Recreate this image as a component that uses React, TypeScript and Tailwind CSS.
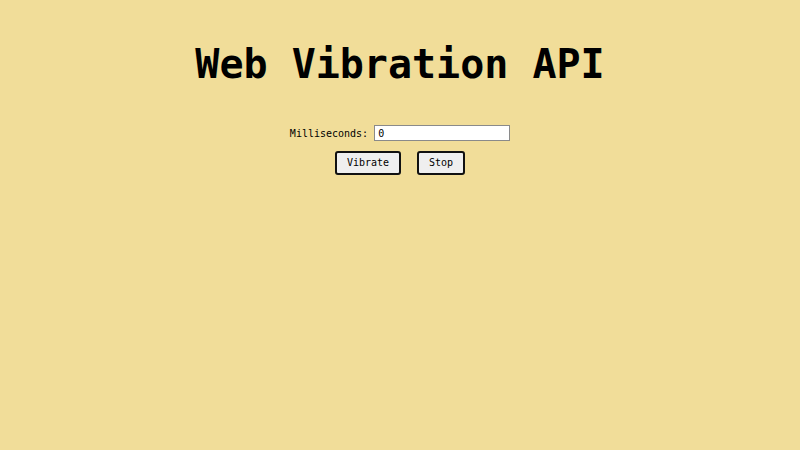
import { useState } from 'react';

export default function App() {
  const [ms, setMs] = useState('0');

  const vibrate = () => {
    if (navigator.vibrate) navigator.vibrate(parseInt(ms) || 0);
  };

  const stop = () => {
    if (navigator.vibrate) navigator.vibrate(0);
  };

  const buttonClass =
    "h-[24px] px-[10px] bg-[#efefef] border-2 border-[#111] rounded-[3px] text-[10px] text-black leading-none";

  return (
    <div
      className="w-[800px] h-[450px] bg-[#f1dd99] flex flex-col items-center text-black"
      style={{ fontFamily: '"DejaVu Sans Mono", monospace' }}
    >
      <h1 className="mt-[40px] text-[40px] font-bold leading-[48px]">Web Vibration API</h1>

      <div className="mt-[37px] flex items-center gap-[6px]">
        <label htmlFor="ms" className="text-[10px]">Milliseconds:</label>
        <input
          id="ms"
          type="text"
          value={ms}
          onChange={(e) => setMs(e.target.value)}
          className="w-[136px] h-[16px] px-[3px] bg-white border border-[#8a8a8a] text-[10px] outline-none"
        />
      </div>

      <div className="mt-[10px] flex gap-[16px]">
        <button onClick={vibrate} className={buttonClass}>Vibrate</button>
        <button onClick={stop} className={buttonClass}>Stop</button>
      </div>
    </div>
  );
}
